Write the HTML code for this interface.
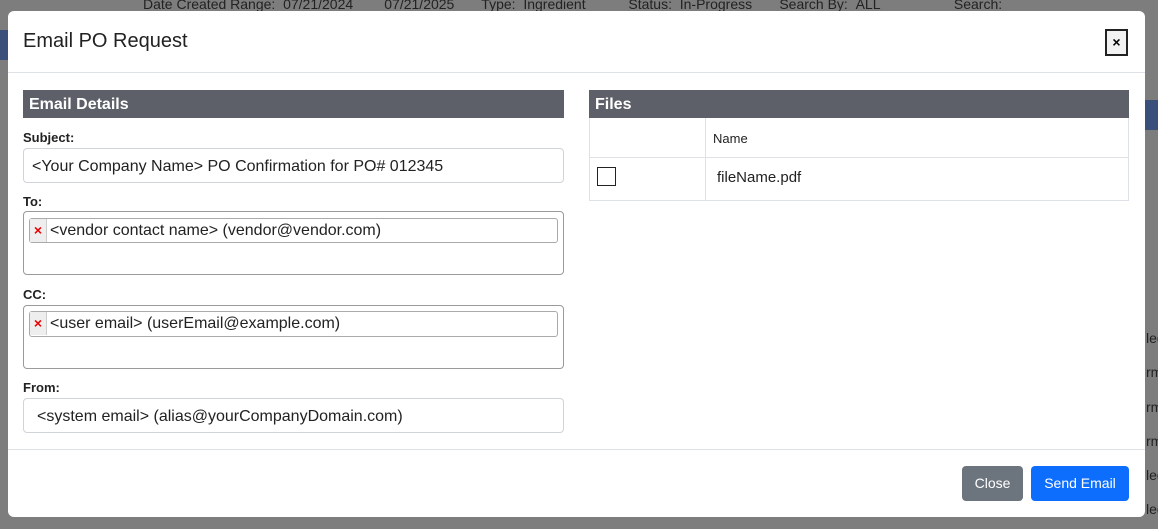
<!DOCTYPE html>
<html><head><style>
body{margin:0;width:1158px;height:529px;overflow:hidden;background:#7d7d7d;font-family:"Liberation Sans",Arial,sans-serif;position:relative}
.bg{position:absolute;font-size:14px;color:#222}
.modal{position:absolute;left:8px;top:11px;width:1137px;height:506px;background:#fff;border-radius:6px}
.abs{position:absolute}
.title{left:15px;top:19px;font-size:20px;color:#222}
.hdr{height:28px;background:#5d6068;color:#fff;font-weight:bold;font-size:16px;line-height:30px;padding-left:6px;box-sizing:border-box}
.lbl{font-size:13px;font-weight:bold;color:#222}
.inp{border:1px solid #ced4da;border-radius:4px;box-sizing:border-box;font-size:16px;color:#222}
.box{border:1px solid #9a9a9a;border-radius:4px;box-sizing:border-box}
.tag{border:1px solid #aaa;border-radius:3px;box-sizing:border-box;font-size:16px;color:#222;line-height:23px}
.tag .x{display:inline-block;width:16px;height:23px;background:#eee;border-right:1px solid #ccc;color:#e00;font-size:14px;font-weight:bold;text-align:center;margin-right:3px;vertical-align:top}
.btn{border-radius:4px;color:#fff;font-size:14px;text-align:center;line-height:35px;height:35px}
</style></head><body>
<div class="bg" style="left:143px;top:-4px">Date Created Range: &nbsp;07/21/2024 &nbsp; &nbsp; &nbsp; &nbsp;07/21/2025 &nbsp; &nbsp; &nbsp; Type: &nbsp;Ingredient &nbsp; &nbsp; &nbsp; &nbsp; &nbsp; Status: &nbsp;In-Progress &nbsp; &nbsp; &nbsp; Search By: &nbsp;ALL &nbsp; &nbsp; &nbsp; &nbsp; &nbsp; &nbsp; &nbsp; &nbsp; &nbsp; Search:</div>
<div class="abs" style="left:0;top:30px;width:8px;height:30px;background:#3a4f7a"></div>
<div class="abs" style="left:1145px;top:100px;width:13px;height:30px;background:#3a4f7a"></div>
<div class="bg" style="left:1146px;top:330px">led</div>
<div class="bg" style="left:1146px;top:364px">rm</div>
<div class="bg" style="left:1146px;top:399px">rm</div>
<div class="bg" style="left:1146px;top:433px">rm</div>
<div class="bg" style="left:1146px;top:467px">led</div>
<div class="bg" style="left:1146px;top:501px">led</div>
<div class="modal">
 <div class="abs title">Email PO Request</div>
 <div class="abs" style="left:1097px;top:18px;width:23px;height:27px;border:2px solid #222;box-sizing:border-box;background:#f2f2f2;font-size:14px;font-weight:bold;text-align:center;line-height:23px">×</div>
 <div class="abs" style="left:0;top:61px;width:1137px;height:1px;background:#dee2e6"></div>

 <div class="abs hdr" style="left:15px;top:79px;width:541px">Email Details</div>
 <div class="abs lbl" style="left:15px;top:119px">Subject:</div>
 <div class="abs inp" style="left:15px;top:137px;width:541px;height:35px;padding:9px 0 0 8px">&lt;Your Company Name&gt; PO Confirmation for PO# 012345</div>
 <div class="abs lbl" style="left:15px;top:183px">To:</div>
 <div class="abs box" style="left:15px;top:200px;width:541px;height:64px"></div>
 <div class="abs tag" style="left:21px;top:207px;width:529px;height:25px"><span class="x">×</span>&lt;vendor contact name&gt; (vendor@vendor.com)</div>
 <div class="abs lbl" style="left:15px;top:276px">CC:</div>
 <div class="abs box" style="left:15px;top:294px;width:541px;height:64px"></div>
 <div class="abs tag" style="left:21px;top:300px;width:529px;height:26px"><span class="x">×</span>&lt;user email&gt; (userEmail@example.com)</div>
 <div class="abs lbl" style="left:15px;top:369px">From:</div>
 <div class="abs inp" style="left:15px;top:387px;width:541px;height:35px;padding:9px 0 0 13px">&lt;system email&gt; (alias@yourCompanyDomain.com)</div>

 <div class="abs hdr" style="left:581px;top:79px;width:540px">Files</div>
 <div class="abs" style="left:581px;top:107px;width:540px;height:83px;border:1px solid #dee2e6;border-top:none;box-sizing:border-box"></div>
 <div class="abs" style="left:697px;top:107px;width:1px;height:82px;background:#dee2e6"></div>
 <div class="abs" style="left:581px;top:146px;width:540px;height:1px;background:#dee2e6"></div>
 <div class="abs" style="left:705px;top:120px;font-size:13px;color:#222">Name</div>
 <div class="abs" style="left:589px;top:156px;width:19px;height:19px;border:1px solid #222;box-sizing:border-box"></div>
 <div class="abs" style="left:709px;top:158px;font-size:15px;color:#222">fileName.pdf</div>

 <div class="abs" style="left:0;top:438px;width:1137px;height:1px;background:#dee2e6"></div>
 <div class="abs btn" style="left:954px;top:455px;width:61px;background:#6c757d">Close</div>
 <div class="abs btn" style="left:1023px;top:455px;width:98px;background:#0d6efd">Send Email</div>
</div>
</body></html>
